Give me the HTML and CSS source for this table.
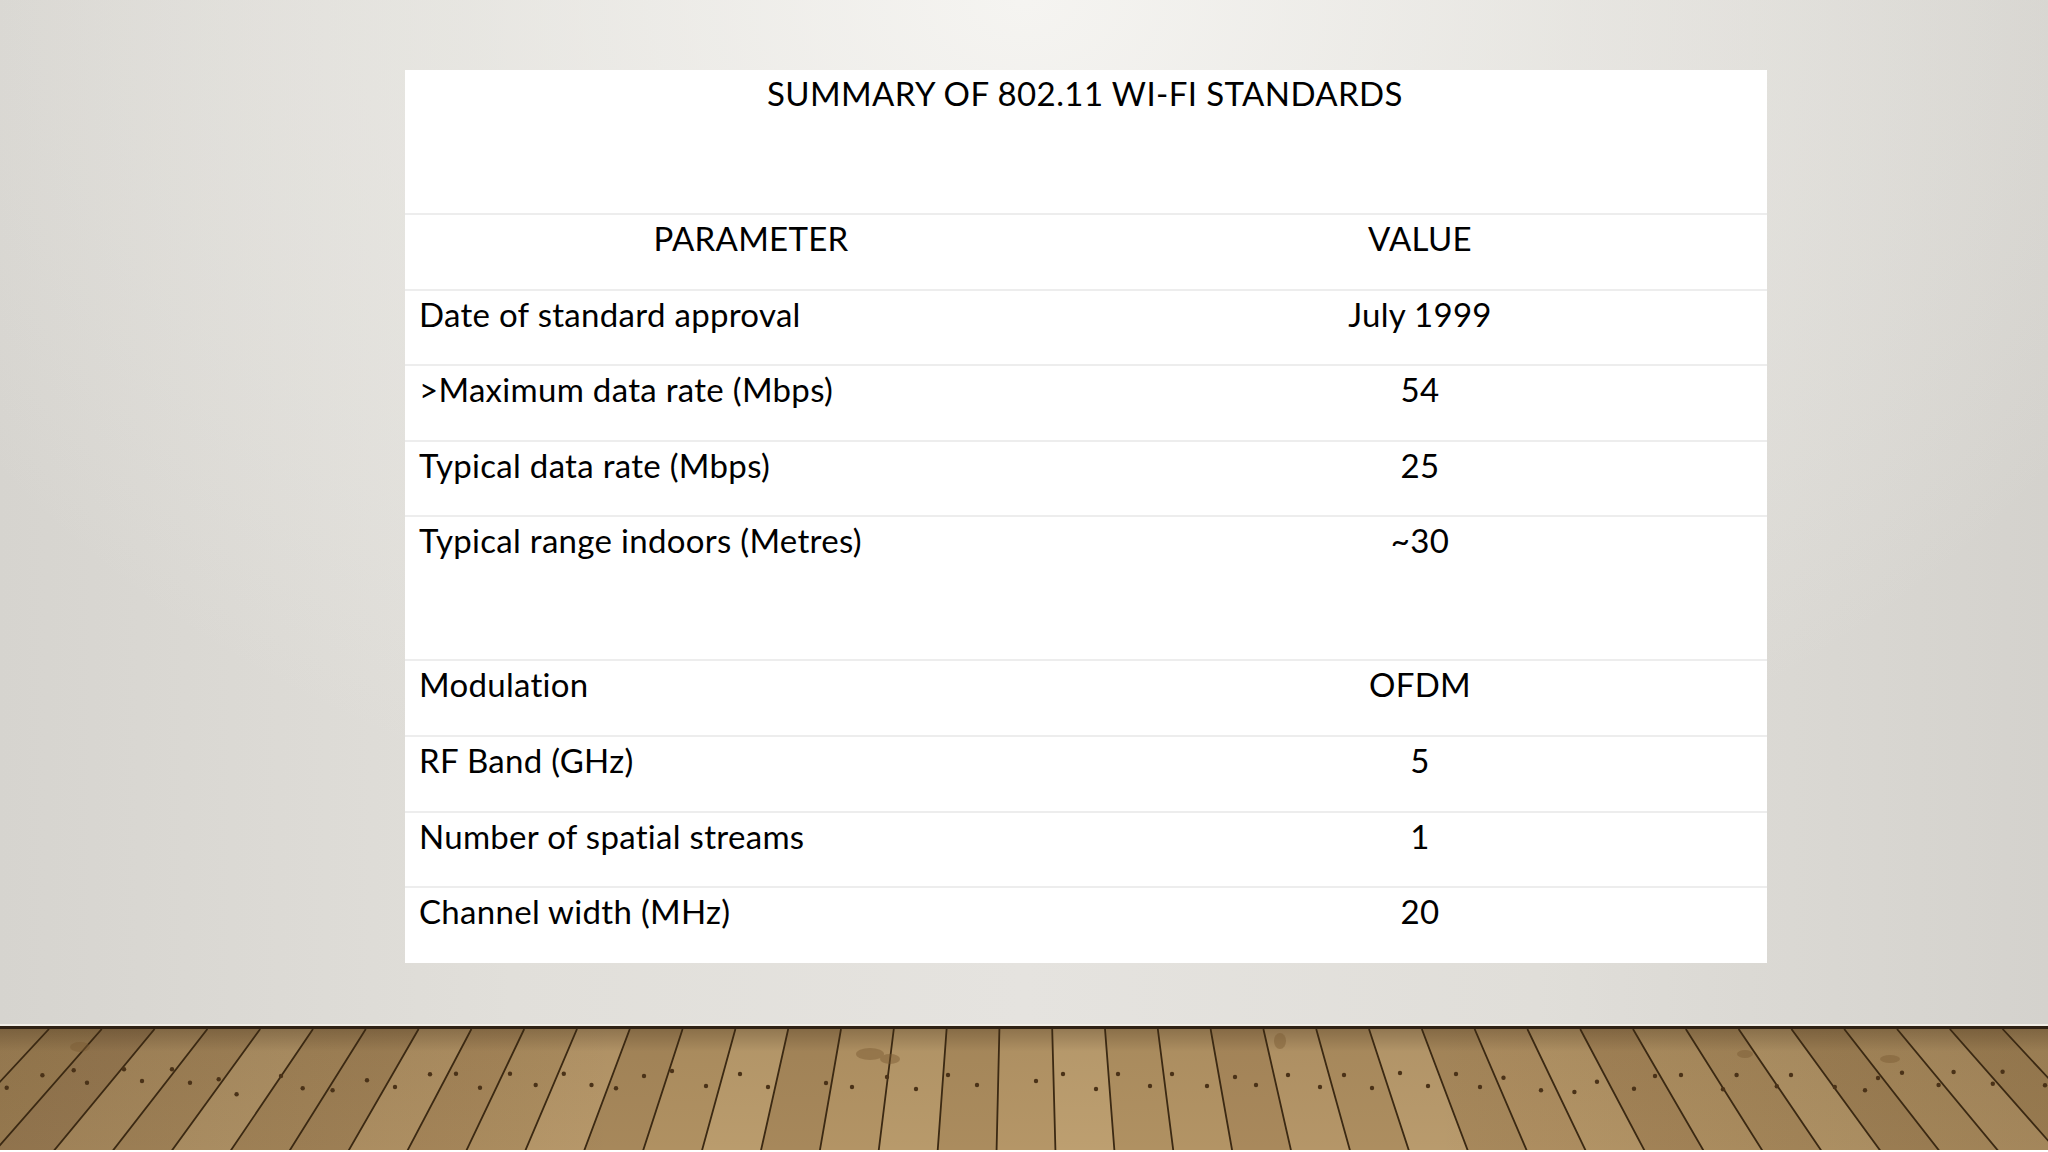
FILE: index.html
```html
<!DOCTYPE html>
<html lang="en">
<head>
<meta charset="utf-8">
<title>Summary of 802.11 Wi-Fi Standards</title>
<link rel="stylesheet" href="styles.css">
</head>
<body>
<div class="stage">
  <div class="wall">
    <div class="card">
      <div class="title">SUMMARY OF 802.11 WI-FI STANDARDS</div>
      <div class="table">
        <div class="row"><div class="cell key center">PARAMETER</div><div class="cell val">VALUE</div></div>
        <div class="row"><div class="cell key">Date of standard approval</div><div class="cell val">July 1999</div></div>
        <div class="row"><div class="cell key">&gt;Maximum data rate (Mbps)</div><div class="cell val">54</div></div>
        <div class="row"><div class="cell key">Typical data rate (Mbps)</div><div class="cell val">25</div></div>
        <div class="row tall"><div class="cell key">Typical range indoors (Metres)</div><div class="cell val">~30</div></div>
        <div class="row"><div class="cell key">Modulation</div><div class="cell val">OFDM</div></div>
        <div class="row"><div class="cell key">RF Band (GHz)</div><div class="cell val">5</div></div>
        <div class="row"><div class="cell key">Number of spatial streams</div><div class="cell val">1</div></div>
        <div class="row"><div class="cell key">Channel width (MHz)</div><div class="cell val">20</div></div>
      </div>
    </div>
  </div>
  <div class="floor">
    <svg class="planks" viewBox="0 0 2048 124" preserveAspectRatio="none" xmlns="http://www.w3.org/2000/svg">
      <defs>
        <linearGradient id="shade" x1="0" y1="0" x2="0" y2="1">
          <stop offset="0" stop-color="#2a1a0a" stop-opacity="0.28"/>
          <stop offset="0.18" stop-color="#2a1a0a" stop-opacity="0.05"/>
          <stop offset="1" stop-color="#2a1a0a" stop-opacity="0"/>
        </linearGradient>
        <linearGradient id="side" x1="0" y1="0" x2="1" y2="0">
          <stop offset="0" stop-color="#3a2610" stop-opacity="0.18"/>
          <stop offset="0.3" stop-color="#3a2610" stop-opacity="0"/>
          <stop offset="0.7" stop-color="#3a2610" stop-opacity="0"/>
          <stop offset="1" stop-color="#3a2610" stop-opacity="0.15"/>
        </linearGradient>
      </defs>
      <rect x="0" y="0" width="2048" height="124" fill="#ae8f61"/>
      <g>
        <polygon fill="#a98a5c" points="49,0 101.8,0 -7,124 -66.1,124"/>
        <polygon fill="#a3845a" points="101.8,0 154.6,0 52,124 -7,124"/>
        <polygon fill="#b39466" points="154.6,0 207.4,0 111,124 52,124"/>
        <polygon fill="#ab8c5f" points="207.4,0 260.2,0 170.1,124 111,124"/>
        <polygon fill="#b89a6c" points="260.2,0 313,0 229.1,124 170.1,124"/>
        <polygon fill="#a98a5d" points="313,0 365.8,0 288.1,124 229.1,124"/>
        <polygon fill="#a5865a" points="365.8,0 418.6,0 347.2,124 288.1,124"/>
        <polygon fill="#b49567" points="418.6,0 471.4,0 406.2,124 347.2,124"/>
        <polygon fill="#a9895c" points="471.4,0 524.2,0 465.2,124 406.2,124"/>
        <polygon fill="#ae8f61" points="524.2,0 577,0 524.3,124 465.2,124"/>
        <polygon fill="#b7986a" points="577,0 629.8,0 583.3,124 524.3,124"/>
        <polygon fill="#a7885b" points="629.8,0 682.6,0 642.3,124 583.3,124"/>
        <polygon fill="#b09162" points="682.6,0 735.4,0 701.3,124 642.3,124"/>
        <polygon fill="#ba9c6d" points="735.4,0 788.2,0 760.4,124 701.3,124"/>
        <polygon fill="#a7885b" points="788.2,0 841,0 819.4,124 760.4,124"/>
        <polygon fill="#b39465" points="841,0 893.8,0 878.4,124 819.4,124"/>
        <polygon fill="#b89a6b" points="893.8,0 946.6,0 937.5,124 878.4,124"/>
        <polygon fill="#ab8c5e" points="946.6,0 999.4,0 996.5,124 937.5,124"/>
        <polygon fill="#b59667" points="999.4,0 1052.2,0 1055.5,124 996.5,124"/>
        <polygon fill="#bd9f70" points="1052.2,0 1105,0 1114.6,124 1055.5,124"/>
        <polygon fill="#b09162" points="1105,0 1157.8,0 1173.6,124 1114.6,124"/>
        <polygon fill="#b39465" points="1157.8,0 1210.6,0 1232.6,124 1173.6,124"/>
        <polygon fill="#a9895c" points="1210.6,0 1263.4,0 1291.6,124 1232.6,124"/>
        <polygon fill="#b59668" points="1263.4,0 1316.2,0 1350.7,124 1291.6,124"/>
        <polygon fill="#ad8e60" points="1316.2,0 1369,0 1409.7,124 1350.7,124"/>
        <polygon fill="#b99b6d" points="1369,0 1421.8,0 1468.7,124 1409.7,124"/>
        <polygon fill="#a8895c" points="1421.8,0 1474.6,0 1527.8,124 1468.7,124"/>
        <polygon fill="#b09062" points="1474.6,0 1527.4,0 1586.8,124 1527.8,124"/>
        <polygon fill="#b69768" points="1527.4,0 1580.2,0 1645.8,124 1586.8,124"/>
        <polygon fill="#a7875a" points="1580.2,0 1633,0 1704.9,124 1645.8,124"/>
        <polygon fill="#b29364" points="1633,0 1685.8,0 1763.9,124 1704.9,124"/>
        <polygon fill="#ab8c5e" points="1685.8,0 1738.6,0 1822.9,124 1763.9,124"/>
        <polygon fill="#b89a6b" points="1738.6,0 1791.4,0 1882,124 1822.9,124"/>
        <polygon fill="#a6875a" points="1791.4,0 1844.2,0 1941,124 1882,124"/>
        <polygon fill="#b09162" points="1844.2,0 1897,0 2000,124 1941,124"/>
        <polygon fill="#b69768" points="1897,0 1949.8,0 2059,124 2000,124"/>
        <polygon fill="#a8895b" points="1949.8,0 2002.6,0 2118.1,124 2059,124"/>
        <polygon fill="#b19263" points="2002.6,0 2060,0 2180,124 2118.1,124"/>
      </g>
      <rect x="0" y="0" width="2048" height="124" fill="url(#side)"/>
      <rect x="0" y="0" width="2048" height="124" fill="url(#shade)"/>
      <path stroke="#3b2913" stroke-width="1.8" fill="none" d="M49,0L-66.1,124M101.8,0L-7,124M154.6,0L52,124M207.4,0L111,124M260.2,0L170.1,124M313,0L229.1,124M365.8,0L288.1,124M418.6,0L347.2,124M471.4,0L406.2,124M524.2,0L465.2,124M577,0L524.3,124M629.8,0L583.3,124M682.6,0L642.3,124M735.4,0L701.3,124M788.2,0L760.4,124M841,0L819.4,124M893.8,0L878.4,124M946.6,0L937.5,124M999.4,0L996.5,124M1052.2,0L1055.5,124M1105,0L1114.6,124M1157.8,0L1173.6,124M1210.6,0L1232.6,124M1263.4,0L1291.6,124M1316.2,0L1350.7,124M1369,0L1409.7,124M1421.8,0L1468.7,124M1474.6,0L1527.8,124M1527.4,0L1586.8,124M1580.2,0L1645.8,124M1633,0L1704.9,124M1685.8,0L1763.9,124M1738.6,0L1822.9,124M1791.4,0L1882,124M1844.2,0L1941,124M1897,0L2000,124M1949.8,0L2059,124M2002.6,0L2118.1,124"/>
      <g fill="#4a3218">
        <circle cx="6.7" cy="58.7" r="2.2"/><circle cx="42.4" cy="46.3" r="2.2"/><circle cx="73.7" cy="41.3" r="2.2"/><circle cx="87" cy="53.7" r="2.2"/>
        <circle cx="124" cy="40.3" r="2.2"/><circle cx="142" cy="52" r="2.2"/><circle cx="172" cy="40.3" r="2.2"/><circle cx="190" cy="53.7" r="2.2"/>
        <circle cx="218.7" cy="50.3" r="2.2"/><circle cx="236.6" cy="65.3" r="2.2"/><circle cx="281" cy="47" r="2.2"/><circle cx="302.7" cy="59.3" r="2.2"/>
        <circle cx="332.6" cy="61.3" r="2.2"/><circle cx="367" cy="51.3" r="2.2"/><circle cx="395" cy="58" r="2.2"/><circle cx="430" cy="45.3" r="2.2"/>
        <circle cx="456" cy="44.7" r="2.2"/><circle cx="480" cy="58.7" r="2.2"/><circle cx="510" cy="44.7" r="2.2"/><circle cx="535.7" cy="56" r="2.2"/>
        <circle cx="563.8" cy="44.7" r="2.2"/><circle cx="591.5" cy="56" r="2.2"/><circle cx="616" cy="59.3" r="2.2"/><circle cx="644" cy="47" r="2.2"/>
        <circle cx="672" cy="42" r="2.2"/><circle cx="706" cy="57" r="2.2"/><circle cx="740" cy="45" r="2.2"/><circle cx="768" cy="58" r="2.2"/>
        <circle cx="826" cy="54" r="2.2"/><circle cx="852" cy="58" r="2.2"/><circle cx="887" cy="48" r="2.2"/><circle cx="916" cy="60" r="2.2"/>
        <circle cx="948" cy="46" r="2.2"/><circle cx="977" cy="56" r="2.2"/><circle cx="1036" cy="52" r="2.2"/><circle cx="1063" cy="45" r="2.2"/>
        <circle cx="1096" cy="60" r="2.2"/><circle cx="1118" cy="45" r="2.2"/><circle cx="1150" cy="57" r="2.2"/><circle cx="1172" cy="45" r="2.2"/>
        <circle cx="1207" cy="57" r="2.2"/><circle cx="1235" cy="48" r="2.2"/><circle cx="1256" cy="56" r="2.2"/><circle cx="1288" cy="46" r="2.2"/>
        <circle cx="1320" cy="58" r="2.2"/><circle cx="1344" cy="46" r="2.2"/><circle cx="1372" cy="59" r="2.2"/><circle cx="1400" cy="44" r="2.2"/>
        <circle cx="1428" cy="57" r="2.2"/><circle cx="1456" cy="45" r="2.2"/><circle cx="1480" cy="58" r="2.2"/>
        <circle cx="1503.5" cy="48.7" r="2.2"/><circle cx="1541" cy="61.3" r="2.2"/><circle cx="1574.4" cy="63" r="2.2"/><circle cx="1597" cy="52.7" r="2.2"/>
        <circle cx="1634" cy="59.7" r="2.2"/><circle cx="1655" cy="47" r="2.2"/><circle cx="1681" cy="46" r="2.2"/><circle cx="1723" cy="60.3" r="2.2"/>
        <circle cx="1736.6" cy="46" r="2.2"/><circle cx="1776.8" cy="57.3" r="2.2"/><circle cx="1791" cy="46" r="2.2"/><circle cx="1834.8" cy="58" r="2.2"/>
        <circle cx="1865" cy="61.3" r="2.2"/><circle cx="1878" cy="49" r="2.2"/><circle cx="1902" cy="43.7" r="2.2"/><circle cx="1938.6" cy="56" r="2.2"/>
        <circle cx="1953.6" cy="43" r="2.2"/><circle cx="1992.8" cy="54.7" r="2.2"/><circle cx="2002.6" cy="42.7" r="2.2"/><circle cx="2045" cy="56.3" r="2.2"/>
      </g>
      <g fill="#7a5a32" opacity="0.45">
        <ellipse cx="870" cy="25" rx="14" ry="6"/>
        <ellipse cx="890" cy="30" rx="10" ry="5"/>
        <ellipse cx="80" cy="18" rx="10" ry="5"/>
        <ellipse cx="1890" cy="30" rx="10" ry="4"/>
        <ellipse cx="1280" cy="12" rx="6" ry="8"/>
        <ellipse cx="1745" cy="25" rx="8" ry="4"/>
      </g>
    </svg>
  </div>
</div>
</body>
</html>
```

FILE: styles.css
```css
html, body {
  margin: 0;
  padding: 0;
  width: 2048px;
  height: 1152px;
  overflow: hidden;
}

body {
  font-family: "Lato", "Open Sans", "Liberation Sans", sans-serif;
  font-variant-ligatures: none;
  color: #000;
}

.stage {
  display: flex;
  flex-direction: column;
  width: 2048px;
  height: 1152px;
}

.wall {
  height: 1026px;
  flex: none;
  background:
    radial-gradient(ellipse 60% 85% at 50% 0%, rgba(246,245,242,0.95) 0%, rgba(236,235,231,0.6) 45%, rgba(220,218,213,0) 100%),
    linear-gradient(90deg, #d6d4cf 0%, #e1dfda 25%, #e5e3df 50%, #e0ded9 75%, #d4d2cd 100%);
  padding-top: 70px;
  box-sizing: border-box;
  border-bottom: 2px solid #f1eee7;
}

.card {
  margin-left: 405px;
  width: 1362px;
  height: 893px;
  background: #fff;
  display: flex;
  flex-direction: column;
}

.title {
  height: 143px;
  box-sizing: border-box;
  padding-top: 4px;
  text-align: center;
  font-size: 33px;
  letter-spacing: 0.4px;
  line-height: 38px;
  padding-right: 2px;
}

.table {
  display: flex;
  flex-direction: column;
}

.row {
  display: grid;
  grid-template-columns: 692px 670px;
  height: 75.6px;
  box-sizing: border-box;
  border-top: 2px solid #ededed;
}

.row.tall {
  height: 144px;
}

.cell {
  font-size: 33px;
  letter-spacing: 0.3px;
  line-height: 38px;
  padding-top: 4px;
  white-space: nowrap;
}

.key {
  padding-left: 14px;
  padding-right: 15px;
}

.key.center {
  text-align: center;
  padding-left: 15px;
}

.val {
  text-align: center;
  padding-left: 15px;
  padding-right: 39px;
}

.floor {
  height: 124px;
  flex: none;
  border-top: 3px solid #2f2113;
  box-sizing: border-box;
  background: #ae8f61;
  overflow: hidden;
}

.planks {
  display: block;
  width: 2048px;
  height: 124px;
}
```
